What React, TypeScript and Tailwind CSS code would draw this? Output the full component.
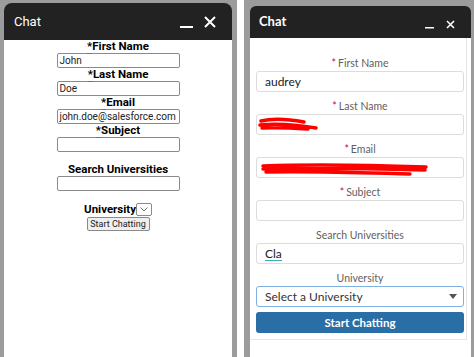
import React from "react";

function LeftField({ label, value, required = true }: { label: string; value?: string; required?: boolean }) {
  return (
    <>
      <label className="block h-[13px] text-[11.5px] leading-[13px] font-bold text-black">
        {required && <abbr className="no-underline border-b border-gray-500">*</abbr>}
        {label}
      </label>
      <div className="mx-auto h-[15px] w-[123px] border border-[#8a8a8a] rounded-[2px] bg-white px-[2px] text-left text-[10px] leading-[13px] text-[#222]">
        {value}
      </div>
    </>
  );
}

function RightLabel({ text, required = true }: { text: string; required?: boolean }) {
  return (
    <div className="mt-[7px] mb-[1px] h-[14px] text-center text-[10.5px] leading-[14px] text-[#5f5f5f]">
      {required && <span className="mr-[2px] text-[#c8102e]">*</span>}
      {text}
    </div>
  );
}

function RightInput({ children }: { children?: React.ReactNode }) {
  return (
    <div className="relative flex h-[21px] items-center rounded-[3px] border border-[#dcdcdc] bg-white px-[8px] text-[12px] text-[#222]">
      {children}
    </div>
  );
}

export default function App() {
  return (
    <div className="flex h-[357px] w-[474px] overflow-hidden bg-white">
      {/* left screenshot */}
      <div className="flex h-full w-[237px] flex-col bg-[#9c9c9c] pl-[4px] pr-[5px] pt-[3px] font-['Roboto',sans-serif]">
        <div className="flex h-[37px] items-center justify-between rounded-t-[8px] bg-[#222] pl-[10px] pr-[16px]">
          <span className="text-[13px] text-white">Chat</span>
          <div className="flex items-center gap-[10px]">
            <svg width="14" height="14" viewBox="0 0 14 14">
              <rect x="0" y="11" width="13" height="2" fill="#fff" />
            </svg>
            <svg width="12" height="12" viewBox="0 0 12 12">
              <path d="M1 1 L11 11 M11 1 L1 11" stroke="#fff" strokeWidth="2" />
            </svg>
          </div>
        </div>
        <div className="flex-1 bg-white text-center">
          <LeftField label="First Name" value="John" />
          <LeftField label="Last Name" value="Doe" />
          <LeftField label="Email" value="john.doe@salesforce.com" />
          <LeftField label="Subject" />
          <div className="h-[11px]" />
          <LeftField label="Search Universities" required={false} />
          <div className="mt-[12px] flex items-center justify-center">
            <span className="text-[11.5px] font-bold leading-[13px]">University</span>
            <span className="flex h-[13px] w-[16px] items-center justify-center rounded-[2px] border border-[#8a8a8a]">
              <svg width="8" height="5" viewBox="0 0 8 5">
                <path d="M0.5 0.5 L4 4 L7.5 0.5" stroke="#777" fill="none" strokeWidth="1" />
              </svg>
            </span>
          </div>
          <button className="mx-auto mt-[1px] block h-[14px] w-[63px] rounded-[2px] border border-[#8a8a8a] bg-[#efefef] text-[9px] leading-[12px] text-[#222]">
            Start Chatting
          </button>
        </div>
      </div>

      <div className="w-[7px] bg-white" />

      {/* right screenshot */}
      <div className="flex h-full flex-1 flex-col bg-[#9c9c9c] pl-[6px] pr-[3px] pt-[6px] font-['Lato',sans-serif]">
        <div className="flex h-[32px] items-center justify-between rounded-t-[6px] bg-[#222] pl-[9px] pr-[16px]">
          <span className="text-[13px] font-bold text-white">Chat</span>
          <div className="flex items-center gap-[11px] pt-[4px]">
            <svg width="10" height="10" viewBox="0 0 10 10">
              <rect x="0" y="8" width="9" height="1.5" fill="#fff" />
            </svg>
            <svg width="9" height="9" viewBox="0 0 9 9">
              <path d="M1 1 L8 8 M8 1 L1 8" stroke="#fff" strokeWidth="1.6" />
            </svg>
          </div>
        </div>
        <div className="flex-1 bg-white pb-[17px] pr-[4px]">
          <div className="relative h-full border-b border-r border-[#e6e6e6] pl-[6px] pr-[2px] pt-[11px]">
            <RightLabel text="First Name" />
            <RightInput>audrey</RightInput>
            <RightLabel text="Last Name" />
            <RightInput>
              <svg width="60" height="16" viewBox="0 0 60 16" className="absolute left-[1px] top-[1px]">
                <path d="M3 5 C15 2 30 3 46 6 M2 9 C20 7 40 9 58 12 M4 12 C20 11 35 12 50 13" stroke="#f00" strokeWidth="3.5" fill="none" strokeLinecap="round" />
              </svg>
            </RightInput>
            <RightLabel text="Email" />
            <RightInput>
              <svg width="170" height="16" viewBox="0 0 170 16" className="absolute left-[3px] top-[3px]">
                <path d="M3 5 C50 3 110 4 166 6 M3 8 C60 7 120 8 165 9 M6 11 C60 10 110 12 150 13" stroke="#f00" strokeWidth="3.5" fill="none" strokeLinecap="round" />
              </svg>
            </RightInput>
            <RightLabel text="Subject" />
            <RightInput />
            <RightLabel text="Search Universities" required={false} />
            <RightInput>
              <span className="border-b border-[#3ab0b0] leading-[13px]">Cla</span>
            </RightInput>
            <RightLabel text="University" required={false} />
            <div className="flex h-[21px] items-center justify-between rounded-[3px] border border-[#7fb2e0] bg-white pl-[8px] pr-[6px] text-[12px] text-[#333]">
              <span>Select a University</span>
              <svg width="8" height="5" viewBox="0 0 8 5">
                <path d="M0 0 L8 0 L4 5 Z" fill="#555" />
              </svg>
            </div>
            <button className="mt-[5px] block h-[21px] w-full rounded-[3px] bg-[#2a6ea6] text-[11.5px] font-bold text-white">
              Start Chatting
            </button>
          </div>
        </div>
      </div>
    </div>
  );
}
